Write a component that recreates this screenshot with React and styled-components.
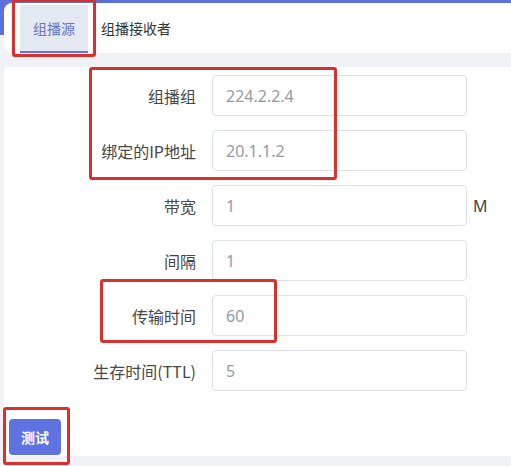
import React from 'react';
import styled, { createGlobalStyle } from 'styled-components';

const GlobalStyle = createGlobalStyle`
  html, body {
    margin: 0;
    padding: 0;
    background: #f0f2f5;
  }
  * { box-sizing: border-box; }
  body {
    font-family: "Noto Sans", "Noto Sans CJK SC", sans-serif;
  }
`;

const fields = [
  { label: '组播组', value: '224.2.2.4' },
  { label: '绑定的IP地址', value: '20.1.1.2' },
  { label: '带宽', value: '1', unit: 'M' },
  { label: '间隔', value: '1' },
  { label: '传输时间', value: '60' },
  { label: '生存时间(TTL)', value: '5' },
];

// red annotation frames drawn over the screenshot
const marks = [
  { left: 12, top: -1, width: 84, height: 58 },
  { left: 89, top: 67, width: 248, height: 113 },
  { left: 100, top: 279, width: 177, height: 64 },
  { left: 3, top: 407, width: 67, height: 58 },
];

const App = () => (
  <>
    <GlobalStyle />
    <Page>
      <Header>
        <Tab $active>组播源</Tab>
        <Tab>组播接收者</Tab>
      </Header>
      <Card>
        <Form>
          {fields.map(f => (
            <Row key={f.label}>
              <Label>{f.label}</Label>
              <Input readOnly value={f.value} />
              {f.unit && <Unit>{f.unit}</Unit>}
            </Row>
          ))}
        </Form>
        <Button>测试</Button>
      </Card>

      {marks.map((m, i) => (
        <Mark key={i} style={m} />
      ))}
    </Page>
  </>
);

const Page = styled.div`
  position: relative;
  width: 511px;
  height: 466px;
  overflow: hidden;
  background: linear-gradient(to bottom, #5d6fd8 0, #5d6fd8 35px, #f0f2f5 35px);
`;

const Header = styled.div`
  display: flex;
  align-items: flex-end;
  height: 50px;
  margin: 3px 0 0 4px;
  padding-left: 16px;
  background: #fff;
  border-radius: 8px 0 0 8px;
`;

const Tab = styled.div`
  display: flex;
  align-items: center;
  height: 48px;
  padding: 0 13px;
  font-size: 14px;
  color: ${p => (p.$active ? '#6a74c8' : '#333')};
  background: ${p => (p.$active ? '#e4e8f0' : 'transparent')};
  border-bottom: 2px solid ${p => (p.$active ? '#6b72d0' : 'transparent')};
`;

const Card = styled.div`
  height: 389px;
  margin: 14px 0 0 4px;
  padding: 8px 0 0 5px;
  background: #fff;
  border-radius: 4px 0 0 4px;
`;

const Form = styled.div`
  display: flex;
  flex-direction: column;
  gap: 14px;
`;

const Row = styled.div`
  display: grid;
  grid-template-columns: 187px 255px auto;
  column-gap: 16px;
  align-items: center;
`;

const Label = styled.div`
  text-align: right;
  font-family: "Noto Sans CJK SC", sans-serif;
  font-size: 16px;
  color: #474747;
`;

const Input = styled.input`
  width: 255px;
  height: 41px;
  padding: 0 13px;
  border: 1px solid #dcdfe6;
  border-radius: 4px;
  outline: none;
  font-family: "Noto Sans", "Noto Sans CJK SC", sans-serif;
  font-size: 16px;
  color: #959aa3;
  background: #fff;
`;

const Unit = styled.span`
  margin-left: -10px;
  font-size: 16px;
  color: #444;
`;

const Button = styled.button`
  display: block;
  width: 52px;
  height: 36px;
  margin-top: 28px;
  border: none;
  border-radius: 4px;
  background: #5f73e0;
  color: #fff;
  font-family: "Noto Sans", "Noto Sans CJK SC", sans-serif;
  font-size: 14px;
  font-weight: 700;
`;

const Mark = styled.div`
  position: absolute;
  border: 3px solid #d8312b;
  border-radius: 3px;
  pointer-events: none;
`;

export default App;
